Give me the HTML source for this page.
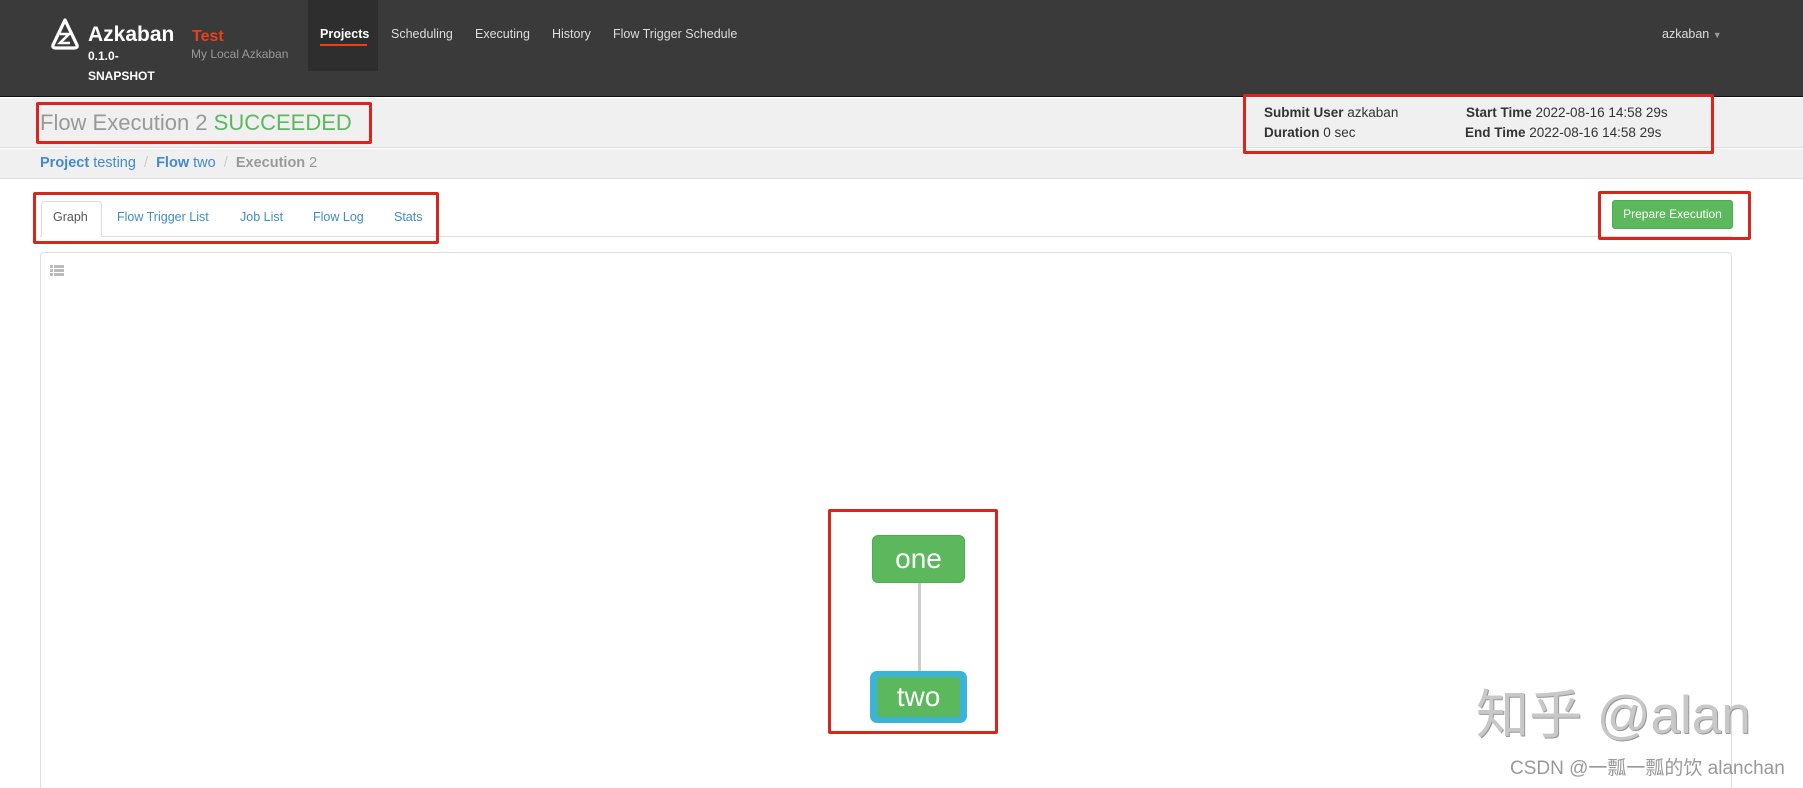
<!DOCTYPE html>
<html><head><meta charset="utf-8"><style>
*{margin:0;padding:0;box-sizing:border-box}
html,body{width:1803px;height:788px;overflow:hidden}
body{background:#fff;font-family:"Liberation Sans","Noto Sans CJK SC",sans-serif;position:relative}
.a{position:absolute;white-space:nowrap}
.nav{position:absolute;left:0;top:0;width:1803px;height:97px;background:#3a3a3a;border-bottom:1px solid #111}
.nl{color:#ddd;font-size:12.5px;top:27px}
.rb{position:absolute;border:3px solid #d9261c;border-radius:2px}
</style></head><body>
<div class="nav"></div>
<svg class="a" style="left:50px;top:18px" width="30" height="32" viewBox="0 0 30 32"><path d="M15 2 L3 27 Q2 30 6 30 L24 30 Q28 30 27 27 Z" fill="none" stroke="#fff" stroke-width="3.2" stroke-linejoin="round"/><path d="M10 16 L19 16 L10 25 L20 25" fill="none" stroke="#fff" stroke-width="2.6"/></svg>
<div class="a" style="left:88px;top:23px;color:#fff;font-size:21px;font-weight:bold">Azkaban</div>
<div class="a" style="left:88px;top:49px;color:#fff;font-size:12px;font-weight:bold">0.1.0-</div>
<div class="a" style="left:88px;top:69px;color:#fff;font-size:12px;font-weight:bold">SNAPSHOT</div>
<div class="a" style="left:192px;top:28px;color:#e8401c;font-size:16px;font-weight:bold">Test</div>
<div class="a" style="left:191px;top:47px;color:#999;font-size:12px">My Local Azkaban</div>
<div class="a" style="left:308px;top:0;width:70px;height:71px;background:#2e2e2e"></div>
<div class="a nl" style="left:320px;color:#fff;font-weight:bold">Projects</div>
<div class="a" style="left:320px;top:44px;width:47px;height:2px;background:#e8401c"></div>
<div class="a nl" style="left:391px">Scheduling</div>
<div class="a nl" style="left:475px">Executing</div>
<div class="a nl" style="left:552px">History</div>
<div class="a nl" style="left:613px">Flow Trigger Schedule</div>
<div class="a nl" style="left:1662px">azkaban <span style="color:#999;font-size:9px">▼</span></div>

<div class="a" style="left:0;top:98px;width:1803px;height:50px;background:#f0f0f0;border-bottom:1px solid #ddd"></div>
<div class="a" style="left:40px;top:110px;font-size:22px;color:#999">Flow Execution 2 <span style="color:#5cb85c">SUCCEEDED</span></div>
<div class="a" style="left:1264px;top:105px;font-size:13.5px;color:#333"><b>Submit User</b> azkaban</div>
<div class="a" style="left:1264px;top:125px;font-size:13.5px;color:#333"><b>Duration</b> 0 sec</div>
<div class="a" style="left:1466px;top:105px;font-size:13.5px;color:#333"><b>Start Time</b> 2022-08-16 14:58 29s</div>
<div class="a" style="left:1465px;top:125px;font-size:13.5px;color:#333"><b>End Time</b> 2022-08-16 14:58 29s</div>
<div class="a" style="left:0;top:149px;width:1803px;height:30px;background:#f0f0f0;border-bottom:1px solid #ddd"></div>
<div class="a" style="left:40px;top:155px;font-size:14.5px;color:#428bca"><b>Project</b> testing <span style="color:#ccc">&nbsp;/&nbsp;</span> <b>Flow</b> two <span style="color:#ccc">&nbsp;/&nbsp;</span> <span style="color:#999"><b>Execution</b> 2</span></div>

<div class="a" style="left:40px;top:236px;width:1692px;height:1px;background:#ddd"></div>
<div class="a" style="left:41px;top:201px;width:61px;height:36px;background:#fff;border:1px solid #ddd;border-bottom:none;border-radius:4px 4px 0 0"></div>
<div class="a" style="left:53px;top:210px;font-size:12.5px;color:#555">Graph</div>
<div class="a" style="left:117px;top:210px;font-size:12.5px;color:#428bca">Flow Trigger List</div>
<div class="a" style="left:240px;top:210px;font-size:12.5px;color:#428bca">Job List</div>
<div class="a" style="left:313px;top:210px;font-size:12.5px;color:#428bca">Flow Log</div>
<div class="a" style="left:394px;top:210px;font-size:12.5px;color:#428bca">Stats</div>
<div class="a" style="left:1612px;top:200px;width:121px;height:29px;background:#5cb85c;border:1px solid #4cae4c;border-radius:3px;color:#fff;font-size:12px;text-align:center;line-height:27px">Prepare Execution</div>

<div class="a" style="left:40px;top:252px;width:1692px;height:540px;border:1px solid #ddd;border-radius:4px"></div>
<svg class="a" style="left:50px;top:265px" width="14" height="12"><g fill="#bbb"><rect x="0" y="0" width="3" height="3"/><rect x="4" y="0" width="10" height="3"/><rect x="0" y="4" width="3" height="3"/><rect x="4" y="4" width="10" height="3"/><rect x="0" y="8" width="3" height="3"/><rect x="4" y="8" width="10" height="3"/></g></svg>

<div class="a" style="left:918px;top:583px;width:3px;height:90px;background:#ccc"></div>
<div class="a" style="left:872px;top:535px;width:93px;height:48px;background:#5cb85c;border:1px solid #4cae4c;border-radius:6px;color:#fff;font-size:28px;text-align:center;line-height:46px">one</div>
<div class="a" style="left:870px;top:671px;width:97px;height:52px;background:#3cb4d8;border-radius:7px"></div>
<div class="a" style="left:877px;top:677px;width:83px;height:40px;background:#5cb85c;border-radius:3px;color:#fff;font-size:28px;text-align:center;line-height:40px">two</div>

<div class="a" style="left:1476px;top:673px;font-size:53px;color:#c8c8c8;text-shadow:1px 1px 0 #999">知乎 @alan</div>
<div class="a" style="left:1510px;top:753px;font-size:19px;color:#999">CSDN @一瓢一瓢的饮 alanchan</div>

<div class="rb" style="left:36px;top:102px;width:336px;height:42px"></div>
<div class="rb" style="left:1243px;top:94px;width:471px;height:60px"></div>
<div class="rb" style="left:33px;top:192px;width:406px;height:52px"></div>
<div class="rb" style="left:1598px;top:191px;width:153px;height:49px"></div>
<div class="rb" style="left:828px;top:509px;width:170px;height:225px"></div>
</body></html>
